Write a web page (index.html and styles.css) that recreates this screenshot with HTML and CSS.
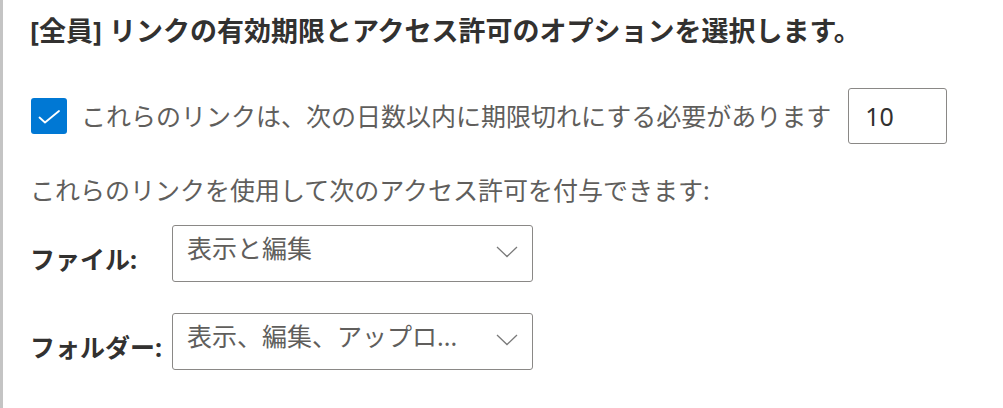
FILE: index.html
```html
<!DOCTYPE html>
<html lang="ja">
<head>
<meta charset="utf-8">
<title>リンクの設定</title>
<link rel="stylesheet" href="styles.css">
</head>
<body>
<div class="panel">
  <h2 class="title">[全員] リンクの有効期限とアクセス許可のオプションを選択します。</h2>
  <div class="expire-row">
    <span class="checkbox" role="checkbox" aria-checked="true">
      <svg width="36" height="36" viewBox="0 0 36 36"><path d="M8.5 19.5 L14 24.5 L28 13" fill="none" stroke="#fff" stroke-width="1.8" stroke-linecap="round" stroke-linejoin="round"/></svg>
    </span>
    <span class="expire-text">これらのリンクは、次の日数以内に期限切れにする必要があります</span>
    <span class="num-input">10</span>
  </div>
  <p class="perm-text">これらのリンクを使用して次のアクセス許可を付与できます:</p>
  <div class="perm-grid">
    <span class="perm-label">ファイル:</span>
    <div class="dropdown">
      <span class="dd-value">表示と編集</span>
      <svg class="chev" width="22" height="12" viewBox="0 0 22 12"><path d="M1 1 L11 10.5 L21 1" fill="none" stroke="#7a7a7a" stroke-width="1.3"/></svg>
    </div>
    <span class="perm-label">フォルダー:</span>
    <div class="dropdown">
      <span class="dd-value">表示、編集、アップロ...</span>
      <svg class="chev" width="22" height="12" viewBox="0 0 22 12"><path d="M1 1 L11 10.5 L21 1" fill="none" stroke="#7a7a7a" stroke-width="1.3"/></svg>
    </div>
  </div>
</div>
</body>
</html>
```
FILE: styles.css
```css
html, body {
  margin: 0;
  padding: 0;
  background: #ffffff;
}

body {
  font-family: "Noto Sans", "Noto Sans CJK JP", sans-serif;
  color: #605e5c;
}

.panel {
  border-left: 3px solid #c4c4c4;
  min-height: 408px;
  box-sizing: border-box;
  padding: 14px 0 0 27px;
  display: flex;
  flex-direction: column;
  align-items: flex-start;
}

.title {
  margin: 0;
  font-size: 27px;
  line-height: 34px;
  font-weight: 700;
  color: #323130;
  white-space: nowrap;
}

.expire-row {
  margin-top: 40px;
  display: flex;
  align-items: center;
  height: 56px;
}

.checkbox {
  width: 36px;
  height: 36px;
  margin-left: 1px;
  border-radius: 3px;
  background: #0078d4;
  display: flex;
  align-items: center;
  justify-content: center;
  flex: none;
}

.checkbox svg {
  display: block;
}

.expire-text {
  margin-left: 14px;
  font-size: 25px;
  line-height: 34px;
  white-space: nowrap;
}

.num-input {
  margin-left: 17px;
  width: 99px;
  height: 56px;
  box-sizing: border-box;
  border: 1.5px solid #8a8886;
  border-radius: 3px;
  padding-left: 16px;
  display: flex;
  align-items: center;
  font-size: 25px;
  color: #323130;
}

.perm-text {
  margin: 29px 0 0 0;
  font-size: 25px;
  line-height: 34px;
  white-space: nowrap;
}

.perm-grid {
  margin-top: 18px;
  display: grid;
  grid-template-columns: max-content 361px;
  column-gap: 10px;
  row-gap: 31px;
}

.perm-label {
  align-self: end;
  margin-bottom: 6px;
  font-size: 25px;
  line-height: 34px;
  font-weight: 700;
  color: #323130;
  white-space: nowrap;
}

.dropdown {
  height: 57px;
  box-sizing: border-box;
  border: 1.5px solid #8a8886;
  border-radius: 3px;
  padding: 0 14px 0 14px;
  display: flex;
  align-items: center;
  justify-content: space-between;
}

.dd-value {
  font-size: 25px;
  line-height: 34px;
  color: #605e5c;
  margin-top: -11px;
  white-space: nowrap;
}

.chev {
  display: block;
  margin-top: -4px;
}
```
